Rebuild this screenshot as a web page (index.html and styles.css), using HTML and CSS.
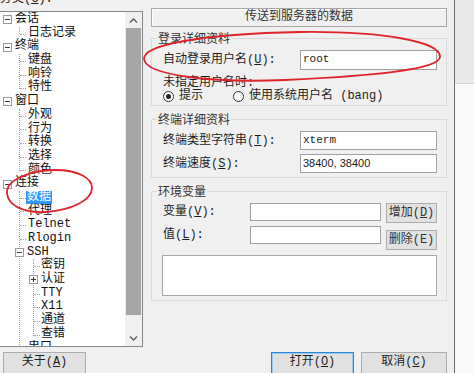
FILE: index.html
```html
<!DOCTYPE html>
<html lang="zh-CN">
  <head>
    <meta charset="UTF-8" />
    <title>PuTTY 配置 - 数据</title>
    <link rel="stylesheet" href="styles.css">
  </head>
  <body>
    <div class="dialog">
      <div class="side">
        <div class="side-label">分类(<u>G</u>):</div>
        <div class="tree">
          <div class="tree-list">
            <div class="node"><span class="exp"></span>会话</div>
            <div class="kids">
              <div class="leaf last">日志记录</div>
            </div>
            <div class="node"><span class="exp"></span>终端</div>
            <div class="kids">
              <div class="leaf">键盘</div>
              <div class="leaf">响铃</div>
              <div class="leaf last">特性</div>
            </div>
            <div class="node"><span class="exp"></span>窗口</div>
            <div class="kids">
              <div class="leaf">外观</div>
              <div class="leaf">行为</div>
              <div class="leaf">转换</div>
              <div class="leaf">选择</div>
              <div class="leaf last">颜色</div>
            </div>
            <div class="node"><span class="exp"></span>连接</div>
            <div class="kids">
              <div class="leaf"><span class="sel">数据</span></div>
              <div class="leaf">代理</div>
              <div class="leaf">Telnet</div>
              <div class="leaf">Rlogin</div>
              <div class="leaf branch"><span class="exp"></span>SSH</div>
              <div class="kids">
                <div class="leaf">密钥</div>
                <div class="leaf branch"><span class="exp closed"></span>认证</div>
                <div class="leaf">TTY</div>
                <div class="leaf">X11</div>
                <div class="leaf">通道</div>
                <div class="leaf last">查错</div>
              </div>
              <div class="leaf last">串口</div>
            </div>
          </div>
          <div class="vscroll">
            <div class="sb-btn">
              <svg width="9" height="5" viewBox="0 0 9 5"><path d="M1 4.5 L4.5 1 L8 4.5" fill="none" stroke="#5a5a5a" stroke-width="1.3"/></svg>
            </div>
            <div class="sb-track"><div class="sb-thumb"></div></div>
            <div class="sb-btn">
              <svg width="9" height="5" viewBox="0 0 9 5"><path d="M1 0.5 L4.5 4 L8 0.5" fill="none" stroke="#5a5a5a" stroke-width="1.3"/></svg>
            </div>
          </div>
        </div>
        <div class="btn about">关于(<u>A</u>)</div>
      </div>

      <div class="panel">
        <div class="title">传送到服务器的数据</div>

        <fieldset class="group g-login">
          <legend>登录详细资料</legend>
          <div class="field">
            <label>自动登录用户名(<u>U</u>):</label>
            <div class="edit">root</div>
          </div>
          <div class="hint">未指定用户名时:</div>
          <div class="radios">
            <span class="radio on"></span><span class="radio-text">提示</span>
            <span class="radio"></span><span>使用系统用户名 (bang)</span>
          </div>
        </fieldset>

        <fieldset class="group g-term">
          <legend>终端详细资料</legend>
          <div class="field">
            <label>终端类型字符串(<u>T</u>):</label>
            <div class="edit">xterm</div>
          </div>
          <div class="field">
            <label>终端速度(<u>S</u>):</label>
            <div class="edit sans">38400, 38400</div>
          </div>
        </fieldset>

        <fieldset class="group g-env">
          <legend>环境变量</legend>
          <div class="env-row">
            <label>变量(<u>V</u>):</label>
            <div class="edit"></div>
            <div class="btn small">增加(<u>D</u>)</div>
          </div>
          <div class="env-row second">
            <label>值(<u>L</u>):</label>
            <div class="edit"></div>
            <div class="btn small">删除(E)</div>
          </div>
          <div class="env-list"></div>
        </fieldset>

        <div class="actions">
          <div class="btn default open">打开(<u>O</u>)</div>
          <div class="btn cancel">取消(<u>C</u>)</div>
        </div>
      </div>
    </div>

    <div class="behind">
      <div class="behind-top"></div>
      <div class="behind-rest"></div>
    </div>

    <!-- hand drawn red marks over the screenshot -->
    <svg class="marks" width="474" height="373" viewBox="0 0 474 373">
      <path d="M144 59 C143 45 200 34 300 32 C385 31 441 42 440 57 C439 70 370 76 285 80 C215 83 146 76 144 59 Z" fill="none" stroke="#e0232b" stroke-width="1.8"/>
      <path d="M7 193 C6 179 33 170 55 170 C78 170 92 178 92 188 C92 200 72 210 46 212 C22 213 8 205 7 193 Z" fill="none" stroke="#e0232b" stroke-width="1.8"/>
    </svg>
  </body>
</html>
```

FILE: styles.css
```css
* {
  box-sizing: border-box;
}

body {
  margin: 0;
  width: 474px;
  height: 373px;
  overflow: hidden;
  position: relative;
  display: flex;
  background: #f8f8f8;
  font: 12px/14px "Liberation Mono", "Noto Sans CJK SC", monospace;
  color: #1e1e1e;
}

u {
  text-underline-offset: 1px;
}

.dialog {
  flex: none;
  width: 455px;
  height: 375px;
  display: flex;
  gap: 8px;
  background: #f0f0f0;
  border-right: 1px solid #6b6b6b;
  box-shadow: 1px 0 3px rgba(0, 0, 0, 0.3);
}

/* left column: category tree */
.side {
  width: 143px;
  margin-top: -8px;
  display: flex;
  flex-direction: column;
}
.side-label {
  height: 14px;
  white-space: nowrap;
}
.tree {
  margin-top: 5px;
  height: 336px;
  display: flex;
  background: #fff;
  border: 1px solid #828790;
  border-left: 0;
  overflow: hidden;
}
.tree-list {
  flex: 1;
  margin-top: 1px;
  line-height: 13.7px;
  color: #111;
}
.node {
  height: 13.7px;
  display: flex;
  align-items: center;
  padding-left: 3px;
  white-space: nowrap;
}
.exp {
  flex: none;
  position: relative;
  width: 9px;
  height: 9px;
  margin-right: 3px;
  border: 1px solid #9a9a9a;
  background: #fff;
}
.exp::before {
  content: "";
  position: absolute;
  left: 1px;
  right: 1px;
  top: 3px;
  height: 1px;
  background: #3a3a3a;
}
.exp.closed::after {
  content: "";
  position: absolute;
  top: 1px;
  bottom: 1px;
  left: 3px;
  width: 1px;
  background: #3a3a3a;
}
.kids {
  margin-left: 19px;
  border-left: 1px dotted #a0a0a0;
}
.kids .kids {
  margin-left: 13px;
}
.leaf {
  position: relative;
  height: 13.7px;
  display: flex;
  align-items: center;
  padding-left: 8px;
  white-space: nowrap;
}
.kids .kids .leaf {
  padding-left: 7px;
}
.leaf::before {
  content: "";
  position: absolute;
  left: 0;
  top: 50%;
  width: 6px;
  border-top: 1px dotted #a0a0a0;
}
.leaf.last::after {
  content: "";
  position: absolute;
  left: -1px;
  top: calc(50% + 1px);
  bottom: 0;
  width: 1px;
  background: #fff;
}
.leaf.branch,
.kids .kids .leaf.branch {
  padding-left: 0;
}
.leaf.branch::before {
  display: none;
}
.leaf.branch .exp {
  margin-left: -5px;
}
.sel {
  margin-left: -2px;
  padding: 0 1px;
  line-height: 13px;
  background: #3399ff;
  color: #fff;
}

.vscroll {
  width: 17px;
  display: flex;
  flex-direction: column;
  background: #f0f0f0;
}
.sb-btn {
  height: 16px;
  display: flex;
  align-items: center;
  justify-content: center;
}
.sb-track {
  flex: 1;
  padding: 0 1px;
}
.sb-thumb {
  height: 287px;
  background: #a6a6a6;
}

/* buttons */
.btn {
  height: 23px;
  padding-bottom: 3px;
  display: flex;
  align-items: center;
  justify-content: center;
  white-space: nowrap;
  background: #e1e1e1;
  border: 1px solid #adadad;
}
.btn.default {
  border-color: #2a86d6;
  box-shadow: inset 0 0 0 1px #9cc8ee;
}
.about {
  width: 83px;
  margin: auto 0 0 3px;
}
.open {
  width: 83px;
}
.cancel {
  width: 86px;
}
.btn.small {
  flex: none;
  width: 51px;
  height: 20px;
  padding-bottom: 0;
  margin-left: 5px;
  color: #333;
}

/* right column */
.panel {
  width: 296px;
  padding-top: 8px;
  display: flex;
  flex-direction: column;
}
.title {
  height: 19px;
  line-height: 17px;
  text-align: center;
  border: 1px solid #a8a8a8;
  box-shadow: inset 1px 1px 0 #fff;
  color: #333;
}
.group {
  min-width: 0;
  margin: 3px 0 0;
  padding: 0 9px 2px 11px;
  border: 1px solid #dadada;
}
.group legend {
  margin-left: -6px;
  padding: 3px 1px 0;
  line-height: 14px;
  color: #333;
}
.g-term {
  margin-top: 5px;
  padding-bottom: 4px;
}
.g-env {
  margin-top: 5px;
  padding-bottom: 4px;
}

.field {
  height: 20px;
  margin-top: 3px;
  display: flex;
  align-items: center;
}
.g-term .field {
  height: 19px;
}
.g-term .field + .field {
  margin-top: 4px;
}
.field label {
  flex: 1;
  white-space: nowrap;
}
.edit {
  flex: none;
  width: 137px;
  height: 100%;
  padding-left: 2px;
  font-size: 11px;
  line-height: 17px;
  white-space: nowrap;
  background: #fff;
  border: 1px solid #a0a0a0;
}
.edit.sans {
  font-family: "Liberation Sans", sans-serif;
}

.hint {
  margin-top: 6px;
  white-space: nowrap;
}
.radios {
  height: 14px;
  margin-top: -1px;
  display: flex;
  align-items: center;
  white-space: nowrap;
}
.radio {
  flex: none;
  position: relative;
  width: 11px;
  height: 11px;
  margin-right: 5px;
  border: 1px solid #333;
  border-radius: 50%;
  background: #fff;
}
.radio.on::after {
  content: "";
  position: absolute;
  left: 2px;
  top: 2px;
  width: 5px;
  height: 5px;
  border-radius: 50%;
  background: #222;
}
.radio-text {
  margin-right: 30px;
}

.env-row {
  height: 20px;
  margin-top: 3px;
  display: flex;
  align-items: flex-start;
}
.env-row.second {
  height: 24px;
}
.env-row.second .btn {
  margin-top: 4px;
}
.env-row label {
  width: 87px;
  line-height: 18px;
  white-space: nowrap;
}
.env-row .edit {
  width: 131px;
  height: 18px;
}
.env-list {
  height: 41px;
  width: 275px;
  margin: 5px 0 0 -1px;
  background: #fff;
  border: 1px solid #a8a8a8;
}

.actions {
  margin-top: auto;
  display: flex;
  justify-content: flex-end;
  gap: 7px;
}

/* the window behind the dialog */
.behind {
  flex: 1;
  display: flex;
  flex-direction: column;
}
.behind-top {
  height: 84px;
  background: #e9e9e9;
  border-bottom: 1px solid #d6d6d6;
}
.behind-rest {
  flex: 1;
  background: #f9f9f9;
}

.marks {
  position: absolute;
  left: 0;
  top: 0;
  pointer-events: none;
}
```
